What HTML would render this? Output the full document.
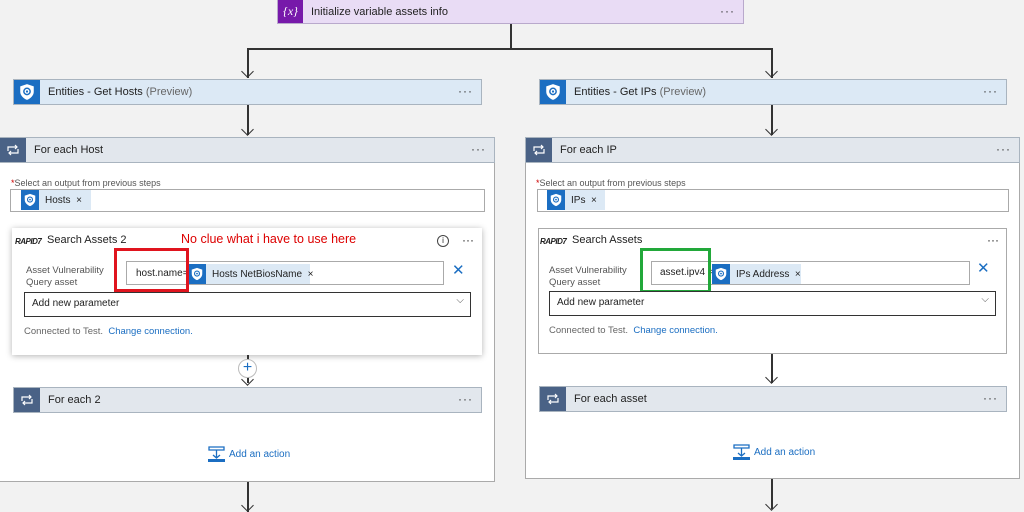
<!DOCTYPE html>
<html><head><meta charset="utf-8"><style>
*{box-sizing:border-box;margin:0;padding:0}
body{width:1024px;height:509px;background:#f2f2f2;position:relative;overflow:hidden;font-family:"Segoe UI","Liberation Sans",sans-serif;font-size:11px;color:#222}
.a{position:absolute;white-space:nowrap}
.vl{position:absolute;width:1.5px;background:#333}
.hl{position:absolute;height:1.5px;background:#333}
.arr{position:absolute;width:9px;height:9px;border-right:1.5px solid #333;border-bottom:1.5px solid #333;transform:rotate(45deg)}
.card{position:absolute;height:26px;border:1px solid #a9b4bf;background:#dce9f5;display:flex;align-items:center;white-space:nowrap}
.card .ic{width:26px;height:100%;background:#1b6ec2;display:flex;align-items:center;justify-content:center}
.card .t{padding-left:8px;font-size:11px}
.dots{position:absolute;right:8px;top:4px;font-size:12px;letter-spacing:1px;color:#333}
.fe{background:#e2e7ed;border-color:#a9b4bf}
.fe .ic{background:#4a6286}
.box{position:absolute;background:#fff;border:1px solid #bbb}
.inp{position:absolute;background:#fff;border:1px solid #999}
.chip{position:absolute;height:20px;background:#dce9f5;display:flex;align-items:center;font-size:10px;white-space:nowrap}
.chip .ci{flex:none;width:18px;height:20px;background:#1b6ec2;display:flex;align-items:center;justify-content:center;margin-right:6px}
.lab{position:absolute;font-size:9px;color:#555;white-space:nowrap}
.dd{position:absolute;height:25px;border:1px solid #333;background:#fff;font-size:10px;padding:5px 0 0 7px}
.link{color:#1b6ec2}
.rap{position:absolute;font-size:8px;font-weight:bold;font-style:italic;letter-spacing:-.5px;color:#222}
</style></head><body>
<svg width="0" height="0" style="position:absolute"><defs>
<symbol id="sh" viewBox="0 0 16 16"><path d="M8 1 L14 3 V8 C14 11 11 14 8 15 C5 14 2 11 2 8 V3 Z" fill="#fff"/><circle cx="8" cy="7.5" r="2.8" fill="none" stroke="#1b6ec2" stroke-width="1.3"/><circle cx="8" cy="7.5" r="1" fill="#1b6ec2"/></symbol>
<symbol id="lp" viewBox="0 0 16 16"><path d="M3 9 V5 H12 M10 3 L12 5 L10 7 M13 7 V11 H4 M6 9 L4 11 L6 13" fill="none" stroke="#fff" stroke-width="1.2"/></symbol>
</defs></svg>

<div class="a" style="left:277px;top:-1px;width:467px;height:25px;background:#e9dcf5;border:1px solid #b9a9cc;display:flex;align-items:center">
<div style="width:25px;height:100%;background:#7719aa;color:#fff;display:flex;align-items:center;justify-content:center;font-style:italic;font-family:'Liberation Serif',serif;font-size:12px">{<i>x</i>}</div>
<div style="padding-left:8px">Initialize variable assets info</div><div class="dots">···</div></div>

<div class="vl" style="left:510px;top:24px;height:25px"></div>
<div class="hl" style="left:247px;top:48px;width:526px"></div>
<div class="vl" style="left:247px;top:48px;height:30px"></div>
<div class="vl" style="left:771px;top:48px;height:30px"></div>
<div class="arr" style="left:243px;top:67px"></div>
<div class="arr" style="left:767px;top:67px"></div>

<div class="card" style="left:13px;top:79px;width:469px"><div class="ic"><svg width="18" height="18"><use href="#sh"/></svg></div><div class="t">Entities - Get Hosts <span style="color:#666">(Preview)</span></div><div class="dots">···</div></div>
<div class="vl" style="left:247px;top:105px;height:30px"></div>
<div class="arr" style="left:243px;top:125px"></div>

<div class="box" style="left:-1px;top:137px;width:496px;height:345px;border-color:#aaa"></div>
<div class="card fe" style="left:-1px;top:137px;width:496px;height:26px"><div class="ic"><svg width="16" height="16"><use href="#lp"/></svg></div><div class="t">For each Host</div><div class="dots">···</div></div>
<div class="lab" style="left:11px;top:178px"><span style="color:#c00">*</span>Select an output from previous steps</div>
<div class="inp" style="left:10px;top:189px;width:475px;height:23px;border-color:#aaa"></div>
<div class="chip" style="left:21px;top:190px;width:70px"><div class="ci"><svg width="14" height="14"><use href="#sh"/></svg></div>Hosts&nbsp;&nbsp;×</div>

<div class="a" style="left:12px;top:228px;width:470px;height:127px;background:#fff;box-shadow:0 1px 6px rgba(0,0,0,.3)"></div>
<div class="rap" style="left:15px;top:237px">RAPID7</div>
<div class="a" style="left:47px;top:234px;font-size:11px">Search Assets 2</div>
<div class="a" style="left:181px;top:232px;font-size:12.5px;color:#d00">No clue what i have to use here</div>
<div class="a" style="left:437px;top:235px;width:12px;height:12px;border:1px solid #444;border-radius:50%;font-size:8px;text-align:center;line-height:10px">i</div>
<div class="a" style="left:462px;top:233px;font-size:12px">···</div>
<div class="lab" style="left:26px;top:265px;line-height:12px;font-size:9.5px">Asset Vulnerability<br>Query asset</div>
<div class="inp" style="left:126px;top:261px;width:318px;height:24px;border-color:#aaa"></div>
<div class="a" style="left:136px;top:268px;font-size:10px">host.name=</div>
<div class="chip" style="left:188px;top:264px;width:122px"><div class="ci"><svg width="14" height="14"><use href="#sh"/></svg></div>Hosts NetBiosName&nbsp;&nbsp;×</div>
<div class="a" style="left:114px;top:248px;width:75px;height:44px;border:3px solid #e0141e"></div>
<div class="a" style="left:452px;top:261px;font-size:15px;color:#1b6ec2">✕</div>
<div class="dd" style="left:24px;top:292px;width:447px">Add new parameter<span style="position:absolute;right:6px;top:2px;color:#555">⌵</span></div>
<div class="a" style="left:24px;top:326px;font-size:9.5px;color:#666">Connected to Test. &nbsp;<span class="link">Change connection.</span></div>

<div class="vl" style="left:247px;top:355px;height:28px"></div>
<div class="a" style="left:238px;top:359px;width:19px;height:19px;border-radius:50%;background:#fff;border:1px solid #bbb;color:#1b6ec2;text-align:center;line-height:16px;font-size:16px">+</div>
<div class="arr" style="left:243px;top:375px"></div>
<div class="card fe" style="left:13px;top:387px;width:469px"><div class="ic"><svg width="16" height="16"><use href="#lp"/></svg></div><div class="t">For each 2</div><div class="dots">···</div></div>

<svg class="a" style="left:208px;top:446px" width="17" height="17"><path d="M1 1H16V4H1Z M8.5 4V12 M5 9L8.5 12L12 9" fill="none" stroke="#1b6ec2" stroke-width="1.3"/><rect x="0" y="13" width="17" height="3" fill="#1b6ec2"/></svg>
<div class="a link" style="left:229px;top:449px;font-size:10px">Add an action</div>
<div class="vl" style="left:247px;top:482px;height:30px"></div>
<div class="arr" style="left:243px;top:501px"></div>

<div class="card" style="left:539px;top:79px;width:468px"><div class="ic"><svg width="18" height="18"><use href="#sh"/></svg></div><div class="t">Entities - Get IPs <span style="color:#666">(Preview)</span></div><div class="dots">···</div></div>
<div class="vl" style="left:771px;top:105px;height:30px"></div>
<div class="arr" style="left:767px;top:125px"></div>

<div class="box" style="left:525px;top:137px;width:495px;height:342px;border-color:#aaa"></div>
<div class="card fe" style="left:525px;top:137px;width:495px;height:26px"><div class="ic"><svg width="16" height="16"><use href="#lp"/></svg></div><div class="t">For each IP</div><div class="dots">···</div></div>
<div class="lab" style="left:536px;top:178px"><span style="color:#c00">*</span>Select an output from previous steps</div>
<div class="inp" style="left:537px;top:189px;width:472px;height:23px;border-color:#aaa"></div>
<div class="chip" style="left:547px;top:190px;width:58px"><div class="ci"><svg width="14" height="14"><use href="#sh"/></svg></div>IPs&nbsp;&nbsp;×</div>

<div class="a" style="left:538px;top:228px;width:469px;height:126px;background:#fff;border:1px solid #aaa"></div>
<div class="rap" style="left:540px;top:237px">RAPID7</div>
<div class="a" style="left:572px;top:234px;font-size:11px">Search Assets</div>
<div class="a" style="left:987px;top:233px;font-size:12px">···</div>
<div class="lab" style="left:549px;top:265px;line-height:12px;font-size:9.5px">Asset Vulnerability<br>Query asset</div>
<div class="inp" style="left:651px;top:261px;width:319px;height:24px;border-color:#aaa"></div>
<div class="a" style="left:660px;top:267px;font-size:10px">asset.ipv4 =</div>
<div class="chip" style="left:712px;top:264px;width:89px"><div class="ci"><svg width="14" height="14"><use href="#sh"/></svg></div>IPs Address&nbsp;&nbsp;×</div>
<div class="a" style="left:640px;top:248px;width:71px;height:45px;border:3px solid #22a83a"></div>
<div class="a" style="left:977px;top:259px;font-size:15px;color:#1b6ec2">✕</div>
<div class="dd" style="left:549px;top:291px;width:447px">Add new parameter<span style="position:absolute;right:6px;top:2px;color:#555">⌵</span></div>
<div class="a" style="left:549px;top:325px;font-size:9.5px;color:#666">Connected to Test. &nbsp;<span class="link">Change connection.</span></div>

<div class="vl" style="left:771px;top:354px;height:29px"></div>
<div class="arr" style="left:767px;top:373px"></div>
<div class="card fe" style="left:539px;top:386px;width:468px"><div class="ic"><svg width="16" height="16"><use href="#lp"/></svg></div><div class="t">For each asset</div><div class="dots">···</div></div>

<svg class="a" style="left:733px;top:444px" width="17" height="17"><path d="M1 1H16V4H1Z M8.5 4V12 M5 9L8.5 12L12 9" fill="none" stroke="#1b6ec2" stroke-width="1.3"/><rect x="0" y="13" width="17" height="3" fill="#1b6ec2"/></svg>
<div class="a link" style="left:754px;top:447px;font-size:10px">Add an action</div>
<div class="vl" style="left:771px;top:479px;height:30px"></div>
<div class="arr" style="left:767px;top:500px"></div>
</body></html>
